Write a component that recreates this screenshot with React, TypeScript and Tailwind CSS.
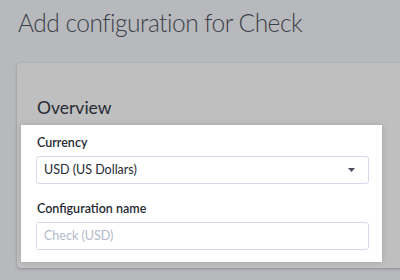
export default function App() {
  return (
    <div
      className="w-[400px] h-[280px] overflow-hidden bg-[#b8b9bd] relative"
      style={{ fontFamily: "Lato, 'Noto Sans', sans-serif" }}
    >
      <div className="pl-[18px] pt-[7px]">
        <h1 className="text-[24.5px] leading-[32px] font-light text-[#3b3f48] tracking-[-0.5px]">
          Add configuration for Check
        </h1>
      </div>
      <div className="ml-[17px] mt-[24px] w-[400px] h-[205px] rounded-[4px] bg-[#bfbfbf] shadow-[0_1px_3px_rgba(0,0,0,0.25)] pt-[33px]">
        <h2 className="pl-[20px] text-[17.5px] leading-[24px] text-[#262a33]">Overview</h2>
        <div className="ml-[4px] mt-[5px] w-[361px] bg-white pl-[15px] pr-[13px] pt-[9px] pb-[12px] shadow-[0_0_6px_rgba(0,0,0,0.15)]">
          <label className="block text-[12.5px] leading-[18px] font-semibold text-[#262a33] px-[1px]">
            Currency
          </label>
          <div className="mt-[4px] h-[28px] rounded-[3px] border border-[#d6dae8] flex items-center justify-between pl-[7px] pr-[13px]">
            <span className="text-[12.5px] text-[#262a33]">USD (US Dollars)</span>
            <svg width="7" height="4" viewBox="0 0 7 4">
              <path d="M0 0h7L3.5 4z" fill="#4a4e5e" />
            </svg>
          </div>
          <label className="block mt-[16px] text-[12.5px] leading-[18px] font-semibold text-[#262a33] px-[1px]">
            Configuration name
          </label>
          <div className="mt-[4px] h-[28px] rounded-[3px] border border-[#d6dae8] flex items-center pl-[7px]">
            <span className="text-[12.5px] text-[#b4bacb]">Check (USD)</span>
          </div>
        </div>
      </div>
    </div>
  );
}
